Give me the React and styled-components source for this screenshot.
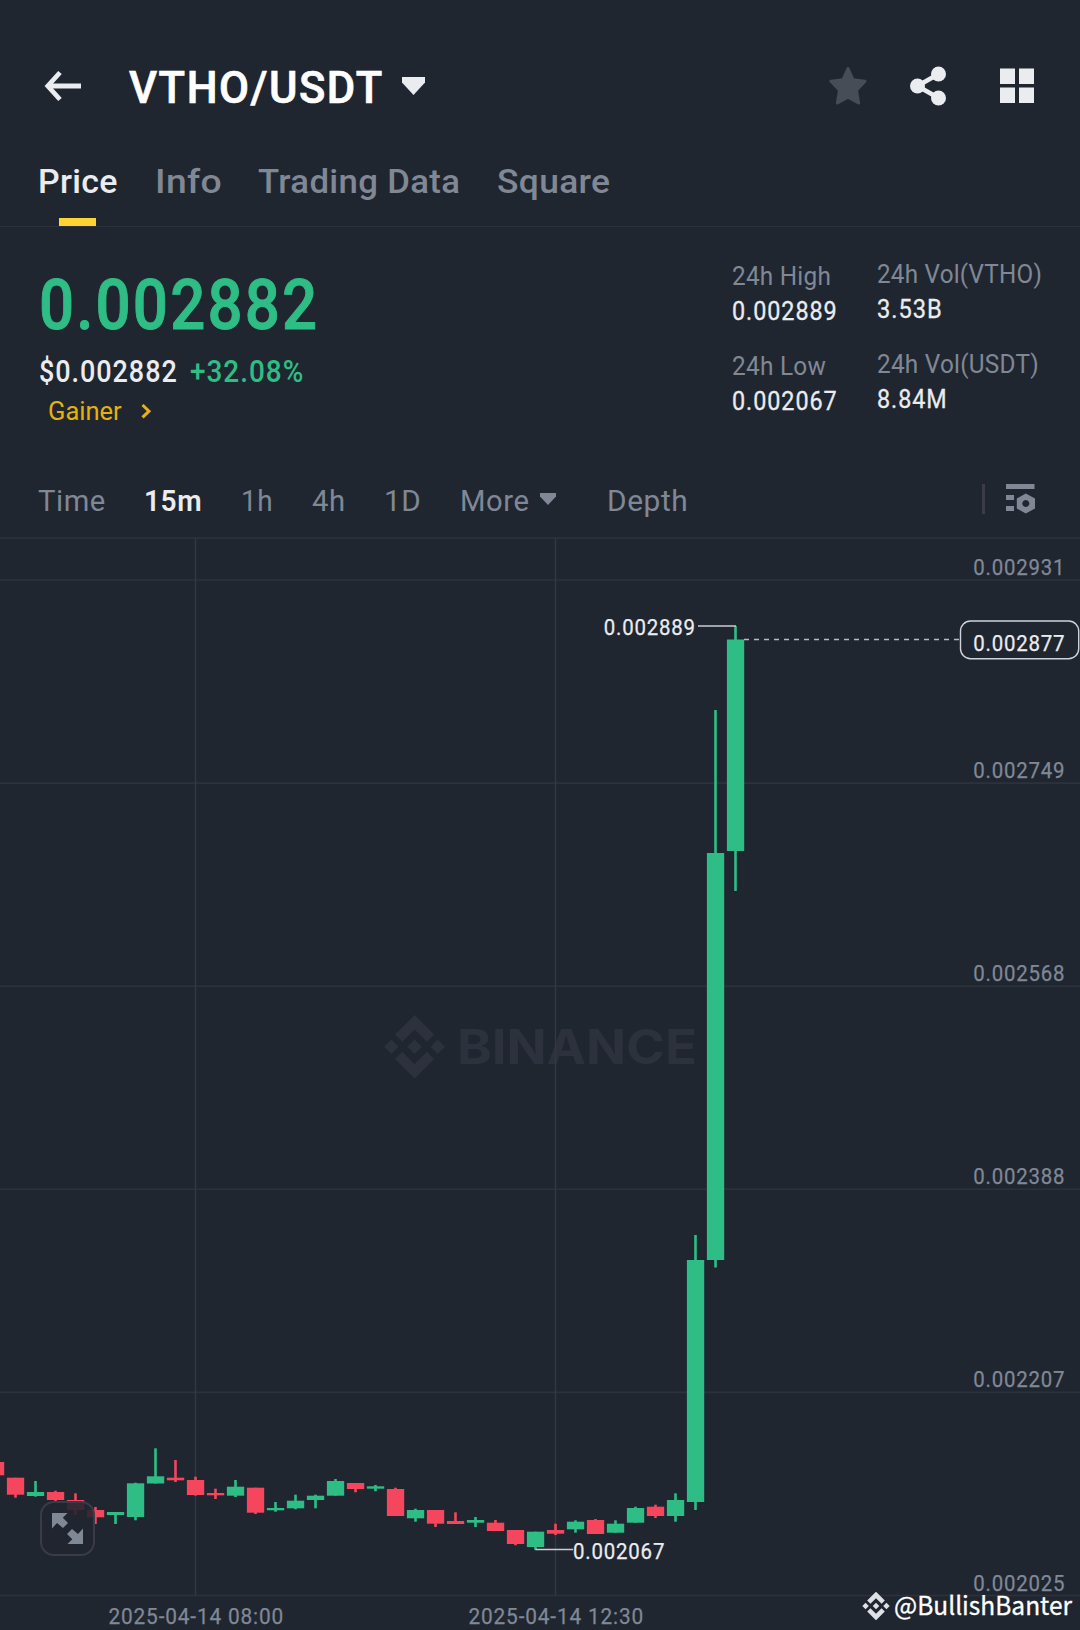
import React, { useLayoutEffect, useRef, useState } from "react";
import styled, { createGlobalStyle } from "styled-components";

const c = {
  bg: "#202630",
  text: "#eaecef",
  muted: "#808896",
  line: "#2c323c",
  vline: "#353842",
  green: "#2ebd85",
  red: "#f6465d",
  yellow: "#fcd535",
  gold: "#e6b10c",
  mark: "#2c313d",
};

const GlobalStyle = createGlobalStyle`
  * { box-sizing: border-box; }
  body { margin: 0; background: ${c.bg}; }
`;

const Screen = styled.main`
  width: 1080px;
  height: 1630px;
  position: relative;
  overflow: hidden;
  display: flex;
  flex-direction: column;
  background: ${c.bg};
  color: ${c.text};
  font-family: Roboto, "Liberation Sans", sans-serif;
`;

const FitBox = styled.span`
  display: block;
  flex: none;
  width: ${(p) => p.$w}px;
  white-space: nowrap;
`;
const FitInner = styled.span`
  display: inline-block;
  transform-origin: left center;
`;
function Fit({ w, children }) {
  const ref = useRef(null);
  const [scale, setScale] = useState(1);
  useLayoutEffect(() => {
    const trailing = parseFloat(getComputedStyle(ref.current).letterSpacing) || 0;
    setScale(w / (ref.current.offsetWidth - trailing));
  }, [w, children]);
  return (
    <FitBox $w={w}>
      <FitInner ref={ref} style={{ transform: `scaleX(${scale})` }}>{children}</FitInner>
    </FitBox>
  );
}

const Header = styled.header`
  height: 122px;
  padding: 50px 44px 0;
  display: flex;
  align-items: center;
`;
const Pair = styled.h1`
  margin: 5px 19px 0 47px;
  font-size: 43.5px;
  line-height: 70px;
  font-weight: 500;
  letter-spacing: 0.035em;
  color: #fff;
  -webkit-text-stroke: 0.7px #fff;
`;
const Actions = styled.div`
  margin-left: auto;
  display: flex;
  align-items: center;
`;
const ActionIcon = styled.svg`
  display: block;
  margin-left: ${(p) => p.$gap || 0}px;
`;
const Icon = styled.svg`
  display: block;
  flex: none;
`;

const Tabs = styled.nav`
  height: 105px;
  padding: 35px 38px 0;
  display: flex;
  gap: 37px;
  border-bottom: 1px solid ${c.line};
`;
const Tab = styled.div`
  display: flex;
  flex-direction: column;
  align-items: center;
  justify-content: space-between;
  font-size: 34px;
  line-height: 48px;
  font-weight: 500;
  letter-spacing: 0.01em;
  color: ${(p) => (p.$active ? c.text : c.muted)};
`;
const Underline = styled.i`
  width: 37px;
  height: 8px;
  background: ${c.yellow};
`;

const Summary = styled.section`
  height: 223px;
  padding-left: 39px;
  display: flex;
`;
const Quote = styled.div`
  width: 692.5px;
  padding-top: 43px;
`;
const LastPrice = styled.div`
  font-size: 71px;
  line-height: 70px;
  font-weight: 500;
  letter-spacing: 0.035em;
  color: ${c.green};
  -webkit-text-stroke: 1px ${c.green};
`;
const Change = styled.div`
  margin-top: 11px;
  display: flex;
  gap: 13px;
  font-size: 30.5px;
  line-height: 42px;
  font-weight: 500;
  letter-spacing: 0.035em;
`;
const Up = styled.span`
  color: ${c.green};
`;
const Tag = styled.div`
  margin: 1px 0 0 9px;
  display: flex;
  align-items: center;
  gap: 19px;
  font-size: 25px;
  line-height: 36px;
  color: ${c.gold};
`;
const StatColumn = styled.dl`
  margin: 0;
  width: 145px;
  padding-top: ${(p) => p.$top}px;
  font-size: 25.5px;
  line-height: 35px;
`;
const StatLabel = styled.dt`
  color: ${c.muted};
  letter-spacing: 0.01em;
`;
const StatValue = styled.dd`
  margin: 0 0 20px;
  letter-spacing: 0.04em;
  -webkit-text-stroke: 0.3px ${c.text};
`;

const Intervals = styled.nav`
  height: 89px;
  padding: 14px 45px 0 37.5px;
  display: flex;
  align-items: center;
  gap: 39px;
  font-size: 30px;
  line-height: 44px;
  letter-spacing: 0.02em;
  color: ${c.muted};
  border-bottom: 2px solid #29303a;
`;
const Interval = styled.div`
  display: flex;
  align-items: center;
  gap: 10px;
  margin-right: ${(p) => p.$after || 0}px;
  color: ${(p) => (p.$active ? c.text : "inherit")};
  font-weight: ${(p) => (p.$active ? 600 : 400)};
`;
const Caret = styled.svg`
  display: block;
  margin-top: -4px;
`;
const ChartSettings = styled.div`
  margin: -3px 0 0 auto;
  display: flex;
  align-items: center;
  gap: 21px;
`;
const Divider = styled.i`
  width: 3px;
  height: 30px;
  background: #3b3c47;
`;

const ChartArea = styled.section`
  position: relative;
  height: 1091px;
`;
const Expand = styled.button`
  position: absolute;
  left: 40px;
  top: 962px;
  width: 55px;
  height: 55px;
  padding: 0;
  display: grid;
  place-items: center;
  border: 2px solid #393b46;
  border-radius: 14px;
  background: rgba(32, 38, 48, 0.88);
`;
const Credit = styled.div`
  position: absolute;
  left: 862px;
  bottom: 6px;
  display: flex;
  align-items: center;
  gap: 3.5px;
  height: 36px;
  font-family: "Noto Sans CJK SC", "Noto Sans", sans-serif;
  font-size: 25px;
  line-height: 36px;
  font-weight: 400;
  color: #fff;
  -webkit-text-stroke: 0.3px #fff;
`;
const Handle = styled.div`
  margin-top: -4px;
`;

// [body top, body bottom, wick top, wick bottom, rising]; one per 15 minutes
const candles = [
  [1462, 1475.3, 1462, 1475.3, 0],
  [1477.7, 1494.7, 1477.7, 1497.7, 0],
  [1492, 1496, 1481, 1496.7, 1],
  [1492, 1500, 1490.7, 1503, 0],
  [1500, 1510, 1493.3, 1515, 0],
  [1510, 1517.3, 1507, 1524, 0],
  [1512, 1515, 1512, 1524, 1],
  [1483.3, 1517, 1482.7, 1520.3, 1],
  [1476.3, 1483.5, 1448.3, 1483.5, 1],
  [1477.7, 1480.3, 1460, 1482, 0],
  [1480, 1495, 1476.7, 1495.7, 0],
  [1493, 1495.3, 1488.7, 1499, 0],
  [1486.7, 1495.7, 1480, 1497, 1],
  [1487.7, 1512.7, 1487.7, 1514, 0],
  [1508, 1510.3, 1502, 1511.7, 1],
  [1500.7, 1508.3, 1494.7, 1509.3, 1],
  [1495.7, 1500, 1494.7, 1508.3, 1],
  [1481, 1495.7, 1479, 1495.7, 1],
  [1483, 1489, 1483, 1492.3, 0],
  [1486.3, 1488.7, 1485, 1491.3, 1],
  [1489, 1516, 1487.7, 1516, 0],
  [1510, 1518.3, 1508.7, 1521.7, 1],
  [1510, 1523.7, 1510, 1527, 0],
  [1521, 1524, 1512.3, 1524, 0],
  [1520, 1522.7, 1517, 1527, 1],
  [1522.7, 1531, 1520, 1531, 0],
  [1530, 1544, 1530, 1545.3, 0],
  [1531.7, 1547, 1531.7, 1550, 1],
  [1530, 1533.7, 1523.7, 1535, 0],
  [1521.7, 1529.3, 1520.3, 1532.7, 1],
  [1520, 1534, 1519, 1534, 0],
  [1523.7, 1532.7, 1520.3, 1532.7, 1],
  [1508, 1522.7, 1506.7, 1522.7, 1],
  [1506.7, 1516, 1504.7, 1518, 0],
  [1500, 1516, 1493.3, 1521.7, 1],
  [1260, 1502, 1235, 1510, 1],
  [853, 1260, 710, 1267.5, 1],
  [639.5, 851, 626, 891, 1],
];

const levels = ["0.002931", "0.002749", "0.002568", "0.002388", "0.002207", "0.002025"];
const times = [
  { x: 195.5, label: "2025-04-14 08:00" },
  { x: 555.5, label: "2025-04-14 12:30" },
];

const Plot = styled.svg`
  display: block;
  font-family: Roboto, "Liberation Sans", sans-serif;
  font-size: 22.8px;
`;
const Figure = styled.text`
  letter-spacing: 0.04em;
  stroke: ${(p) => p.fill};
  stroke-width: 0.25px;
`;

function Fig({ x, y, fill = c.muted, w = 92.2, children }) {
  return (
    <Figure x={x} y={y} fill={fill} textLength={w} lengthAdjust="spacingAndGlyphs">
      {children}
    </Figure>
  );
}

function BinanceShape() {
  return (
    <path d="M38.17 53.41 64 27.59l25.84 25.83 15.02-15.02L64 -2.45 23.15 38.39ZM0.5 64 15.52 48.98 30.54 64 15.52 79.02ZM38.17 74.59 64 100.41l25.84-25.83 15.02 15.01L64 130.45 23.15 89.6ZM97.46 64 112.48 48.98 127.5 64 112.48 79.02ZM79.23 63.99 64 48.75 48.76 63.99 64 79.23Z" />
  );
}

function Chart() {
  return (
    <Plot width="1080" height="1091" viewBox="0 539 1080 1091">
      <g fill={c.mark}>
        <g transform="translate(384 1016.2) scale(0.478)">
          <BinanceShape />
        </g>
        <text x="457" y="1064" fontSize="48" fontWeight="700" fontFamily="Inter, sans-serif" textLength="240" lengthAdjust="spacingAndGlyphs">
          BINANCE
        </text>
      </g>
      {levels.map((label, i) => (
        <line key={label} x1="0" x2="1080" y1={580 + i * 203.1} y2={580 + i * 203.1} stroke={c.line} strokeWidth="1.6" />
      ))}
      {times.map((t) => (
        <line key={t.x} x1={t.x} x2={t.x} y1="539" y2="1595" stroke={c.vline} strokeWidth="1.3" />
      ))}
      {candles.map(([top, bottom, high, low, up], i) => {
        const x = i * 20 - 4.5;
        return (
          <g key={i} fill={up ? c.green : c.red}>
            <rect x={x - 1.3} y={high} width="2.6" height={low - high} />
            <rect x={x - 8.6} y={top} width="17.3" height={bottom - top} />
          </g>
        );
      })}
      {levels.map((label, i) => (
        <Fig key={label} x={973.2} y={575 + i * 203.1}>{label}</Fig>
      ))}
      {times.map((t) => (
        <Fig key={t.x} x={t.x - 87} y={1624.2} w={175.5}>{t.label}</Fig>
      ))}
      <line x1="744" x2="960" y1="639.5" y2="639.5" stroke="#b7bac6" strokeWidth="1.5" strokeDasharray="5 5" />
      <path d="M698 626H736" stroke="#c9ccd6" strokeWidth="1.6" />
      <Fig x={603.7} y={634.8} fill={c.text}>0.002889</Fig>
      <rect x="960.5" y="621" width="118.2" height="37.7" rx="10" fill={c.bg} stroke="#cfd2db" strokeWidth="1.4" />
      <Fig x={973.2} y={651} fill={c.text}>0.002877</Fig>
      <path d="M535.5 1549.5H573" stroke="#c9ccd6" strokeWidth="1.6" />
      <Fig x={573} y={1558.5} fill={c.text}>0.002067</Fig>
    </Plot>
  );
}

export default function App() {
  return (
    <Screen>
      <GlobalStyle />
      <Header>
        <Icon width="38" height="34" viewBox="0 0 38 34" fill="none" stroke={c.text} strokeWidth="5">
          <path d="M37 17H5" />
          <path d="M16 3.500 3.800 17l12.200 13.500" strokeWidth="4.8" />
        </Icon>
        <Pair>
          <Fit w={253.5}>VTHO/USDT</Fit>
        </Pair>
        <Icon width="23" height="20" viewBox="0 0 23 20" fill={c.text}>
          <path d="M0 1h23v5.500L11.500 19 0 6.500Z" />
        </Icon>
        <Actions>
          <ActionIcon width="38" height="40" viewBox="0 0 38 40" fill="#474d57" stroke="#474d57" strokeWidth="3" strokeLinejoin="round">
            <path d="M19 2.500 24 13.800 36 15.200 27.500 24.200 29.600 37 19 31.300 8.400 37 10.500 24.200 2 15.200 14 13.800Z" />
          </ActionIcon>
          <ActionIcon $gap={43} width="37" height="40" viewBox="0 0 37 40" fill={c.text}>
            <path d="M28.500 8 7.500 20 28.500 32" fill="none" stroke={c.text} strokeWidth="4.600" />
            <circle cx="7.500" cy="20" r="7.500" />
            <circle cx="28.500" cy="8" r="7.500" />
            <circle cx="28.500" cy="32" r="7.500" />
          </ActionIcon>
          <ActionIcon $gap={53} width="36" height="36" viewBox="0 0 36 36" fill={c.text}>
            <path d="M0 0.500h15v15.500H0ZM19 0.500h15v15.500H19ZM0 19.500h15v15.500H0ZM19 19.500h15v15.500H19Z" />
          </ActionIcon>
        </Actions>
      </Header>

      <Tabs>
        <Tab $active>
          <Fit w={79.5}>Price</Fit>
          <Underline />
        </Tab>
        <Tab><Fit w={66.5}>Info</Fit></Tab>
        <Tab><Fit w={202}>Trading Data</Fit></Tab>
        <Tab><Fit w={113}>Square</Fit></Tab>
      </Tabs>

      <Summary>
        <Quote>
          <LastPrice><Fit w={278}>0.002882</Fit></LastPrice>
          <Change>
            <Fit w={138}>$0.002882</Fit>
            <Up><Fit w={113.5}>+32.08%</Fit></Up>
          </Change>
          <Tag>
            <Fit w={73.5}>Gainer</Fit>
            <Icon width="11" height="16" viewBox="0 0 11 16" fill="none" stroke={c.gold} strokeWidth="3">
              <path d="M1.500 1 8 7.200l-6.500 6.200" />
            </Icon>
          </Tag>
        </Quote>
        <StatColumn $top={31.5}>
          <StatLabel><Fit w={99}>24h High</Fit></StatLabel>
          <StatValue><Fit w={104.5}>0.002889</Fit></StatValue>
          <StatLabel><Fit w={93.5}>24h Low</Fit></StatLabel>
          <StatValue><Fit w={104.5}>0.002067</Fit></StatValue>
        </StatColumn>
        <StatColumn $top={29.5}>
          <StatLabel><Fit w={165}>24h Vol(VTHO)</Fit></StatLabel>
          <StatValue><Fit w={65}>3.53B</Fit></StatValue>
          <StatLabel><Fit w={162}>24h Vol(USDT)</Fit></StatLabel>
          <StatValue><Fit w={69.5}>8.84M</Fit></StatValue>
        </StatColumn>
      </Summary>

      <Intervals>
        <Interval><Fit w={67.5}>Time</Fit></Interval>
        <Interval $active><Fit w={57.5}>15m</Fit></Interval>
        <Interval><Fit w={32}>1h</Fit></Interval>
        <Interval><Fit w={33.5}>4h</Fit></Interval>
        <Interval><Fit w={37}>1D</Fit></Interval>
        <Interval $after={12}>
          <Fit w={69.5}>More</Fit>
          <Caret width="16" height="12" viewBox="0 0 16 12" fill={c.muted}>
            <path d="M0 0h16v3.500L8 12 0 3.500Z" />
          </Caret>
        </Interval>
        <Interval><Fit w={81}>Depth</Fit></Interval>
        <ChartSettings>
          <Divider />
          <Icon width="29" height="30" viewBox="0 0 29 30" fill={c.muted}>
            <path d="M0 0h28.500v5H0ZM0 11h8v5H0ZM0 22h8v5H0Z" />
            <path fillRule="evenodd" d="M19.800 9.500 29 14.600V24.400L19.800 29.600 10.800 24.400V14.600ZM19.800 16a3.500 3.500 0 1 0 .01 0Z" />
          </Icon>
        </ChartSettings>
      </Intervals>

      <ChartArea>
        <Chart />
        <Expand aria-label="Expand chart">
          <Icon width="31" height="31" viewBox="0 0 31 31" fill={c.muted}>
            <path d="M0 0H15.500L10.800 4.800 16 10 11 15 5 10 0 15.500ZM31 31H15.500L20.300 26.200 15 21 20 16 26 21 31 15.500Z" />
          </Icon>
        </Expand>
        <Credit>
          <Icon width="28" height="28" viewBox="0 -1 128 130" fill="#dfe1e6">
            <BinanceShape />
          </Icon>
          <Handle><Fit w={178.5}>@BullishBanter</Fit></Handle>
        </Credit>
      </ChartArea>
    </Screen>
  );
}
